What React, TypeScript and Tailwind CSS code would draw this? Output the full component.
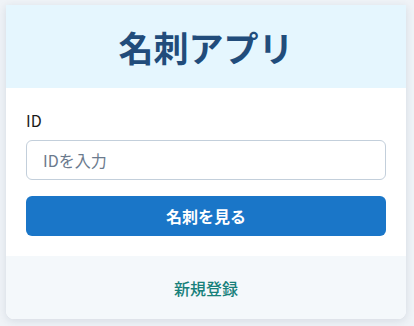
import React from "react";

export default function App() {
  return (
    <div
      className="min-h-[326px] w-[414px] bg-[#eff3f7] px-[6px] pt-[5px]"
      style={{ fontFamily: '"Noto Sans CJK JP", "Noto Sans", sans-serif' }}
    >
      <div className="w-[400px] overflow-hidden rounded-b-lg bg-white shadow-[0_2px_8px_rgba(30,50,80,0.12)]">
        <div className="flex h-[83px] items-center justify-center bg-[#e5f6fe]">
          <h1 className="text-[35px] font-bold leading-none text-[#214c7b]">名刺アプリ</h1>
        </div>
        <div className="flex flex-col px-5 pb-5 pt-5">
          <label className="text-[16px] leading-6 text-[#1a1a1a]">ID</label>
          <input
            className="mt-2 h-10 w-full rounded-md border border-[#c3cfdb] px-4 text-[16px] text-[#1a1a1a] placeholder:text-[#6b7a8d] outline-none"
            style={{ fontFamily: '"Noto Sans CJK JP", "Noto Sans", sans-serif' }}
            placeholder="IDを入力"
          />
          <button
            className="mt-4 flex h-10 w-full items-center justify-center rounded-md bg-[#1a76c8] text-[16px] font-bold text-white"
            style={{ fontFamily: '"Noto Sans CJK JP", "Noto Sans", sans-serif' }}
          >
            名刺を見る
          </button>
        </div>
        <div className="flex h-[63px] items-center justify-center bg-[#f4f8fb]">
          <span className="text-[16px] font-medium text-[#17807a]">新規登録</span>
        </div>
      </div>
    </div>
  );
}
